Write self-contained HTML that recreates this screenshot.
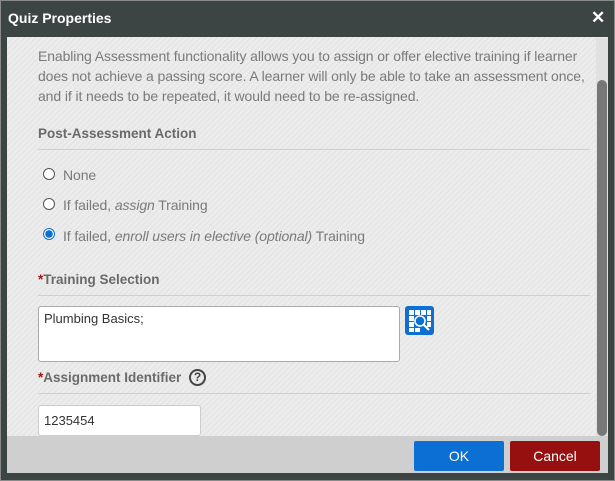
<!DOCTYPE html>
<html><head><style>
*{margin:0;padding:0;box-sizing:border-box}
body{width:615px;height:481px;background:#3c4543;font-family:"Liberation Sans",sans-serif;position:relative;overflow:hidden}
.a{position:absolute;white-space:nowrap}
#frame{position:absolute;left:0;top:0;width:615px;height:481px;border:1px solid #8a8a8a;background:#3c4543}
#body{position:absolute;left:7px;top:37px;width:601px;height:399px;background:repeating-linear-gradient(135deg,#e6e6e6 0 2px,#ededed 2px 4px)}
#foot{position:absolute;left:7px;top:436px;width:601px;height:37px;background:#cfcfcf}
.p{color:#7a7a7a;font-size:14px;letter-spacing:-0.1px}
.h{color:#6a6a6a;font-size:13.5px;font-weight:bold}
.hr{position:absolute;left:38px;width:552px;height:1px;background:#cfcfcf}
.r{width:12px;height:12px;border-radius:50%;border:1px solid #555;background:#fff}
.req{color:#9b1515}
</style></head><body>
<div id="frame"></div>
<div class="a" style="left:8px;top:10px;color:#fff;font-weight:bold;font-size:14px">Quiz Properties</div>
<div class="a" style="left:591px;top:8px;color:#fff;font-weight:bold;font-size:17px">✕</div>
<div id="body"></div>
<div class="a" style="left:596px;top:38px;width:12px;height:398px;background:#e0e0e0"></div>
<div class="a" style="left:597px;top:80px;width:10px;height:356px;background:#777;border-radius:5px"></div>
<div class="a p" style="left:38px;top:48px">Enabling Assessment functionality allows you to assign or offer elective training if learner</div>
<div class="a p" style="left:38px;top:68px">does not achieve a passing score. A learner will only be able to take an assessment once,</div>
<div class="a p" style="left:38px;top:88px">and if it needs to be repeated, it would need to be re-assigned.</div>
<div class="a h" style="left:38px;top:126px">Post-Assessment Action</div>
<div class="hr" style="top:149px"></div>
<div class="a r" style="left:43px;top:168px"></div>
<div class="a p" style="left:63px;top:167px">None</div>
<div class="a r" style="left:43px;top:198px"></div>
<div class="a p" style="left:63px;top:197px">If failed, <i>assign</i> Training</div>
<div class="a r" style="left:43px;top:228px;border-color:#0b6fd3;background:radial-gradient(circle,#0b6fd3 0 3.5px,#fff 4px)"></div>
<div class="a p" style="left:63px;top:228px">If failed, <i>enroll users in elective (optional)</i> Training</div>
<div class="a h" style="left:38px;top:272px"><span class="req">*</span>Training Selection</div>
<div class="hr" style="top:295px"></div>
<div class="a" style="left:38px;top:306px;width:362px;height:56px;background:#fff;border:1px solid #aaa;border-radius:3px;font-size:13px;color:#333;padding:4px 5px">Plumbing Basics;</div>
<div class="a" style="left:405px;top:306px;width:29px;height:29px;background:#0b6fd3;border-radius:3px">
<svg width="29" height="29" viewBox="0 0 29 29"><g fill="#fff"><rect x="4" y="4" width="5" height="5"/><rect x="10" y="4" width="5" height="5"/><rect x="16" y="4" width="5" height="5"/><rect x="22" y="4" width="4" height="5"/><rect x="4" y="10" width="5" height="5"/><rect x="22" y="10" width="4" height="5"/><rect x="4" y="16" width="5" height="5"/><rect x="22" y="16" width="4" height="5"/><rect x="4" y="22" width="5" height="4"/><rect x="10" y="22" width="5" height="4"/></g><circle cx="15" cy="15" r="5" fill="#0b6fd3" stroke="#fff" stroke-width="1.6"/><path d="M18.5 18.5L24 24" stroke="#fff" stroke-width="2"/></svg></div>
<div class="a h" style="left:38px;top:370px"><span class="req">*</span>Assignment Identifier</div>
<div class="a" style="left:189px;top:369px;width:17px;height:17px;border:2px solid #444;border-radius:50%;font-size:12px;font-weight:bold;color:#444;text-align:center;line-height:13px">?</div>
<div class="hr" style="top:393px"></div>
<div class="a" style="left:38px;top:405px;width:163px;height:31px;background:#fff;border:1px solid #ccc;border-radius:3px;font-size:13px;color:#333;padding:7px 5px">1235454</div>
<div id="foot"></div>
<div class="a" style="left:414px;top:441px;width:90px;height:30px;background:#0b6fd3;border-radius:2px;color:#fff;font-size:14px;text-align:center;line-height:30px">OK</div>
<div class="a" style="left:510px;top:441px;width:90px;height:30px;background:#961010;border-radius:2px;color:#fff;font-size:14px;text-align:center;line-height:30px">Cancel</div>
</body></html>
